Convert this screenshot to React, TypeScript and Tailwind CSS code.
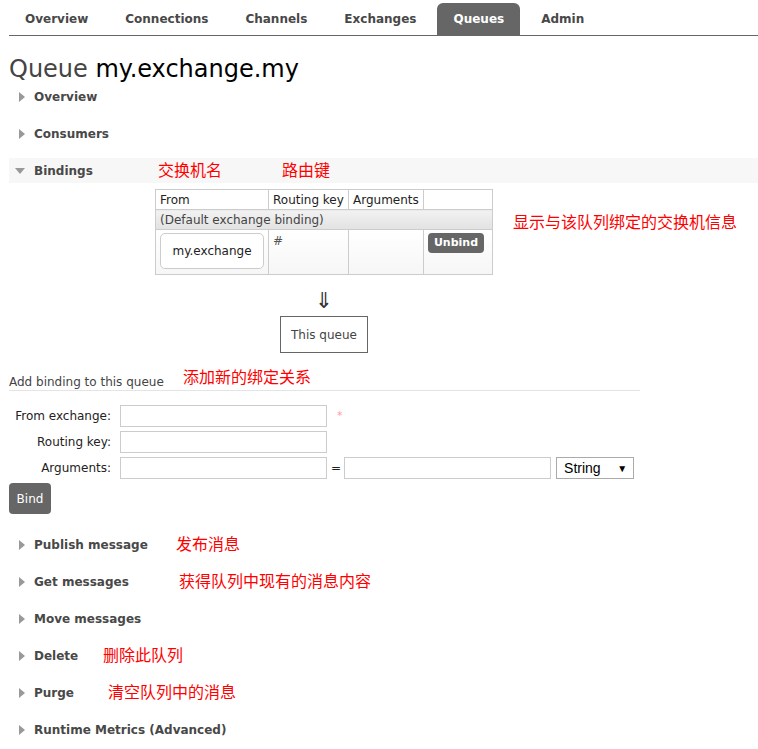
import React from 'react';

const font = { fontFamily: '"DejaVu Sans", Verdana, "Noto Sans CJK SC", sans-serif' };
const cjk = { fontFamily: '"Noto Sans CJK SC", "DejaVu Sans", sans-serif' };

const tabs = ['Overview', 'Connections', 'Channels', 'Exchanges', 'Queues', 'Admin'];

function Closed() {
  return <span className="inline-block w-0 h-0 border-y-[5px] border-y-transparent border-l-[6px] border-l-[#999] mr-[9px] ml-[10px]" />;
}

function Open() {
  return <span className="inline-block w-0 h-0 border-x-[5px] border-x-transparent border-t-[6px] border-t-[#999] mr-[9px] ml-[6px]" />;
}

function Section({ title, note, noteX, open }: { title: string; note?: string; noteX?: number; open?: boolean }) {
  return (
    <div className={`relative flex items-center h-[25px] ${open ? 'bg-[#f7f7f7]' : ''}`}>
      {open ? <Open /> : <Closed />}
      <span className="text-[12px] font-bold text-[#484848]">{title}</span>
      {note && (
        <span className="absolute top-[-1px] text-[16px] text-[#ff0000]" style={{ ...cjk, left: noteX }}>
          {note}
        </span>
      )}
    </div>
  );
}

export default function App() {
  return (
    <div className="bg-white w-[758px] h-[749px] overflow-hidden pl-[9px] text-[12px] text-[#222]" style={font}>
      <nav className="flex items-end h-[36px] border-b border-[#666]">
        {tabs.map((t) => (
          <div
            key={t}
            className={`h-[32px] flex items-center px-4 mr-[5px] text-[12px] font-bold rounded-t-[6px] ${
              t === 'Queues' ? 'bg-[#666] text-white' : 'text-[#484848]'
            }`}
          >
            {t}
          </div>
        ))}
      </nav>

      <h1 className="text-[24px] leading-[30px] mt-[18px] text-[#444]">
        Queue <span className="text-black">my.exchange.my</span>
      </h1>

      <Section title="Overview" />
      <div className="h-[12px]" />
      <Section title="Consumers" />
      <div className="h-[12px]" />
      <Section title="Bindings" open note="交换机名" noteX={149} />

      <div className="relative">
        <span className="absolute top-[-26px] left-[273px] text-[16px] text-[#ff0000]" style={cjk}>路由键</span>
        <span className="absolute top-[26px] left-[504px] text-[16px] text-[#ff0000]" style={cjk}>显示与该队列绑定的交换机信息</span>

        <div className="ml-[146px] pt-[6px] w-[338px]">
          <table className="border-collapse w-[338px] text-[12px]">
            <thead>
              <tr className="h-[20px]">
                <th className="border border-[#ccc] font-normal text-left px-[4px] w-[113px]">From</th>
                <th className="border border-[#ccc] font-normal text-left px-[4px] w-[80px]">Routing key</th>
                <th className="border border-[#ccc] font-normal text-left px-[4px] w-[75px]">Arguments</th>
                <th className="border border-[#ccc]" />
              </tr>
            </thead>
            <tbody>
              <tr className="h-[20px]">
                <td colSpan={4} className="border border-[#ccc] px-[4px] text-[#444] bg-gradient-to-b from-[#f2f2f2] to-[#e2e2e2]">
                  (Default exchange binding)
                </td>
              </tr>
              <tr className="h-[45px] align-top bg-gradient-to-b from-white to-[#f6f6f6]">
                <td className="border border-[#ccc] p-[3px_4px]">
                  <div className="h-[36px] border border-[#ccc] rounded-[5px] bg-white flex items-center justify-center text-[12px] text-[#222]">
                    my.exchange
                  </div>
                </td>
                <td className="border border-[#ccc] px-[4px] pt-[2px] text-[#555]">#</td>
                <td className="border border-[#ccc]" />
                <td className="border border-[#ccc] px-[4px] pt-[3px]">
                  <button className="h-[20px] w-[56px] rounded-[4px] bg-[#666] text-white font-bold text-[11px]">Unbind</button>
                </td>
              </tr>
            </tbody>
          </table>
        </div>

        <div className="ml-[271px] w-[88px] flex flex-col items-center">
          <div className="text-[22px] leading-[22px] text-[#333] mt-[15px]">⇓</div>
          <div className="mt-[4px] w-[88px] h-[37px] border border-[#666] flex items-center justify-center text-[#444]">
            This queue
          </div>
        </div>
      </div>

      <div className="relative mt-[21px] w-[631px] border-b border-[#e4e4e4] text-[12px] leading-[16px] text-[#444]">
        Add binding to this queue
        <span className="absolute left-[174px] top-[-6px] text-[16px] text-[#ff0000]" style={cjk}>添加新的绑定关系</span>
      </div>

      <div className="mt-[14px] flex flex-col gap-[4px]">
        <div className="flex items-center h-[22px]">
          <label className="w-[102px] text-right">From exchange:</label>
          <input className="ml-[9px] w-[207px] h-[22px] border border-[#ccc]" />
          <span className="ml-[10px] text-[#f9a] text-[11px]">*</span>
        </div>
        <div className="flex items-center h-[22px]">
          <label className="w-[102px] text-right">Routing key:</label>
          <input className="ml-[9px] w-[207px] h-[22px] border border-[#ccc]" />
        </div>
        <div className="flex items-center h-[22px]">
          <label className="w-[102px] text-right">Arguments:</label>
          <input className="ml-[9px] w-[207px] h-[22px] border border-[#ccc]" />
          <span className="ml-[4px] mr-[3px]">=</span>
          <input className="w-[207px] h-[22px] border border-[#ccc]" />
          <div className="ml-[5px] w-[78px] h-[22px] border border-[#aaa] flex items-center justify-between pl-[7px] pr-[6px] text-[14px] text-black" style={{ fontFamily: '"Liberation Sans", Arial, sans-serif' }}>
            String <span className="text-[10px]">▼</span>
          </div>
        </div>
      </div>

      <button className="mt-[4px] w-[42px] h-[31px] rounded-[4px] bg-[#666] text-white text-[12px]">Bind</button>

      <div className="mt-[18px]" />
      <Section title="Publish message" note="发布消息" noteX={167} />
      <div className="h-[12px]" />
      <Section title="Get messages" note="获得队列中现有的消息内容" noteX={170} />
      <div className="h-[12px]" />
      <Section title="Move messages" />
      <div className="h-[12px]" />
      <Section title="Delete" note="删除此队列" noteX={94} />
      <div className="h-[12px]" />
      <Section title="Purge" note="清空队列中的消息" noteX={99} />
      <div className="h-[12px]" />
      <Section title="Runtime Metrics (Advanced)" />
    </div>
  );
}
